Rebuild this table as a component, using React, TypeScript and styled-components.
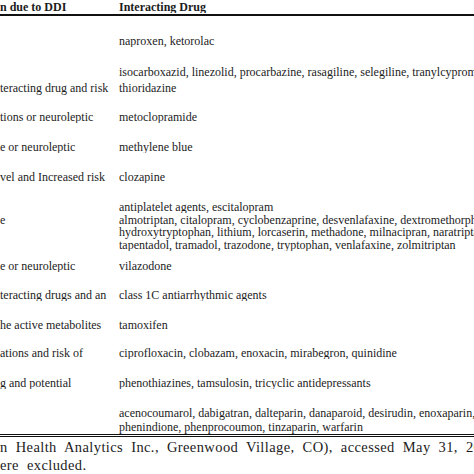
import React from "react";
import styled, { createGlobalStyle } from "styled-components";

type Row = {
  pad: number;
  lh?: number;
  left: string[];
  right: string[];
};

const rows: Row[] = [
  { pad: 18.75, left: [], right: ["naproxen, ketorolac"] },
  {
    pad: 16.5,
    lh: 16.5,
    left: ["", "teracting drug and risk"],
    right: [
      "isocarboxazid, linezolid, procarbazine, rasagiline, selegiline, tranylcypromine,",
      "thioridazine",
    ],
  },
  { pad: 14, left: ["tions or neuroleptic"], right: ["metoclopramide"] },
  { pad: 17.5, left: ["e or neuroleptic"], right: ["methylene blue"] },
  { pad: 17.5, left: ["vel and Increased risk"], right: ["clozapine"] },
  { pad: 17.5, left: [], right: ["antiplatelet agents, escitalopram"] },
  {
    pad: 0.5,
    left: ["e"],
    right: [
      "almotriptan, citalopram, cyclobenzaprine, desvenlafaxine, dextromethorphan, 5-",
      "hydroxytryptophan, lithium, lorcaserin, methadone, milnacipran, naratriptan, rizatriptan,",
      "tapentadol, tramadol, trazodone, tryptophan, venlafaxine, zolmitriptan",
    ],
  },
  { pad: 8.5, left: ["e or neuroleptic"], right: ["vilazodone"] },
  { pad: 16.5, left: ["teracting drugs and an"], right: ["class 1C antiarrhythmic agents"] },
  { pad: 17.5, left: ["he active metabolites"], right: ["tamoxifen"] },
  {
    pad: 15.5,
    left: ["ations and risk of"],
    right: ["ciprofloxacin, clobazam, enoxacin, mirabegron, quinidine"],
  },
  {
    pad: 17.5,
    left: ["g and potential"],
    right: ["phenothiazines, tamsulosin, tricyclic antidepressants"],
  },
  {
    pad: 16.75,
    lh: 14,
    left: [],
    right: [
      "acenocoumarol, dabigatran, dalteparin, danaparoid, desirudin, enoxaparin, fondaparinux,",
      "phenindione, phenprocoumon, tinzaparin, warfarin",
    ],
  },
];

const App = () => {
  return (
    <Page>
      <GlobalStyle />
      <Table>
        <Head>
          <Cell>n due to DDI</Cell>
          <Cell>Interacting Drug</Cell>
        </Head>
        {rows.map((row, i) => (
          <BodyRow key={i} $pad={row.pad} $lh={row.lh ?? 12.5}>
            <Cell>
              {row.left.map((t, j) => (
                <Line key={j}>{t || "\u00a0"}</Line>
              ))}
            </Cell>
            <Cell>
              {row.right.map((t, j) => (
                <Line key={j}>{t}</Line>
              ))}
            </Cell>
          </BodyRow>
        ))}
        <DoubleRule />
      </Table>
      <Footnote>
        <FootLine>
          n Health Analytics Inc., Greenwood Village, CO), accessed May 31, 2019
        </FootLine>
        <FootLine>ere excluded.</FootLine>
      </Footnote>
    </Page>
  );
};

const GlobalStyle = createGlobalStyle`
  html, body {
    margin: 0;
    padding: 0;
    background: #fff;
    overflow: hidden;
  }
`;

const Page = styled.div`
  width: 474px;
  height: 474px;
  overflow: hidden;
  font-family: "Liberation Serif", "Times New Roman", serif;
  color: #1c1c1c;
`;

const Table = styled.div`
  width: 760px;
  display: flex;
  flex-direction: column;
`;

const Head = styled.div`
  display: grid;
  grid-template-columns: 119px 1fr;
  font-size: 12px;
  font-weight: bold;
  line-height: 12.5px;
  padding: 0.75px 0 0.75px;
  border-bottom: 2px solid #111;
`;

const BodyRow = styled.div<{ $pad: number; $lh: number }>`
  display: grid;
  grid-template-columns: 119px 1fr;
  font-size: 12px;
  line-height: ${(p) => p.$lh}px;
  padding-top: ${(p) => p.$pad}px;
`;

const Cell = styled.div`
  white-space: nowrap;
  overflow: hidden;
`;

const Line = styled.div``;

const DoubleRule = styled.div`
  height: 1px;
  border-top: 1px solid #111;
  border-bottom: 1.5px solid #111;
`;

const Footnote = styled.div`
  font-size: 14.5px;
  line-height: 18px;
  padding-top: 0.5px;
`;

const FootLine = styled.div`
  white-space: nowrap;
  letter-spacing: 0.4px;
  word-spacing: 4px;
`;

export default App;
